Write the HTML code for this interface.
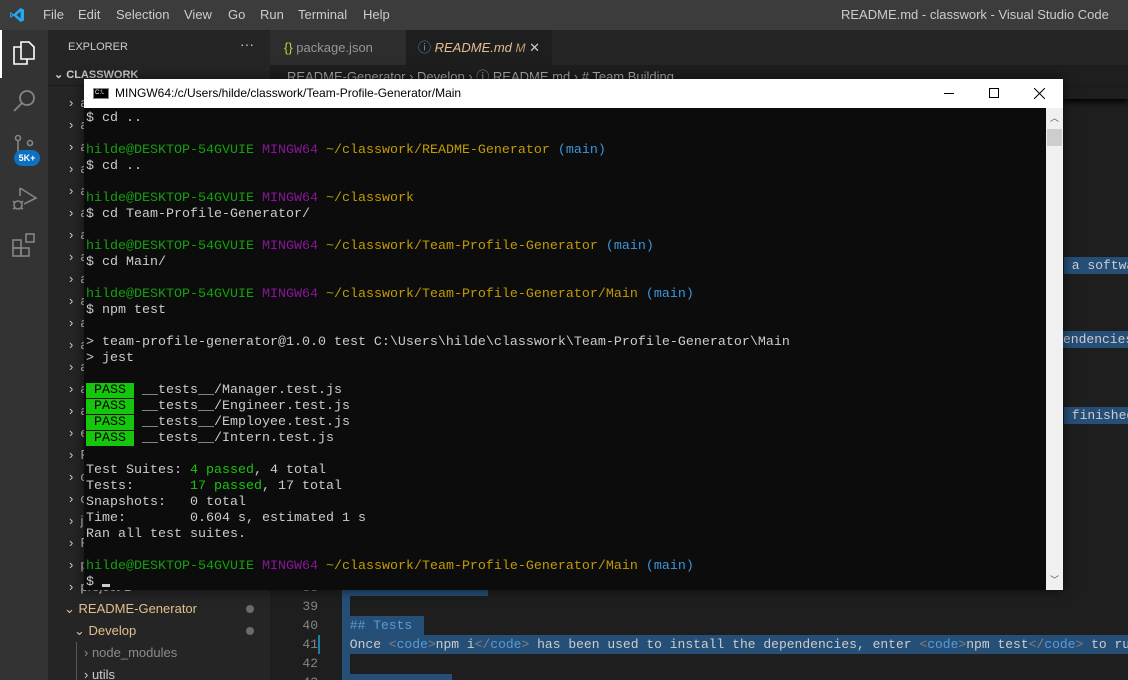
<!DOCTYPE html>
<html style="overflow:hidden;width:1128px;height:680px"><head><meta charset="utf-8"><style>
*{margin:0;padding:0;box-sizing:border-box}
body{width:1128px;height:680px;overflow:hidden;background:#1e1e1e;font-family:"Liberation Sans",sans-serif;position:relative}
.abs{position:absolute}
#title{left:0;top:0;width:1128px;height:30px;background:#3c3c3c;color:#ccc;font-size:13px}
#title span{position:absolute;top:7px}
#act{left:0;top:30px;width:48px;height:650px;background:#333;overflow:hidden}
#side{left:48px;top:30px;width:222px;height:650px;background:#252526;color:#ccc;font-size:13px;overflow:hidden}
#tabs{left:270px;top:30px;width:858px;height:35px;background:#252526}
.row{position:absolute;left:0;height:22px;line-height:22px}
.mono{font-family:"Liberation Mono","DejaVu Sans Mono",monospace}
#term{left:84px;top:79px;width:979px;height:511px;background:#0c0c0c;box-shadow:0 0 12px rgba(0,0,0,.6);overflow:hidden}
#tt{left:0;top:0;width:979px;height:29px;background:#fff;color:#000;font-size:12px}
#tb{left:0;top:30px;width:962px;height:481px;color:#ccc;font-size:13.33px;line-height:16px;white-space:pre}
.g{color:#13a10e}.p{color:#881798}.y{color:#c19c00}.b{color:#3a96dd}.gg{color:#16c60c}
.pass{background:#16c60c;color:#000}
.sel{background:#264f78}
</style></head><body>
<div id="title" class="abs">
<svg class="abs" style="left:9px;top:7px" width="16" height="16" viewBox="0 0 16 16"><path d="M11.5 1 L15 2.6 V13.4 L11.5 15 L4.5 8.6 L1.8 10.7 L1 10.3 V5.7 L1.8 5.3 L4.5 7.4 Z M11.5 4.6 L7.5 8 L11.5 11.4 Z M1.8 6.6 V9.4 L3.4 8 Z" fill="#23a9f2"/></svg>
<span style="left:43px">File</span><span style="left:78px">Edit</span><span style="left:116px">Selection</span><span style="left:184px">View</span><span style="left:228px">Go</span><span style="left:260px">Run</span><span style="left:298px">Terminal</span><span style="left:363px">Help</span>
<span style="left:841px">README.md - classwork - Visual Studio Code</span>
</div>
<div id="act" class="abs">
<div class="abs" style="left:0;top:0;width:2px;height:48px;background:#fff"></div>
<svg class="abs" style="left:12px;top:10px" width="24" height="26" viewBox="0 0 24 26" fill="none" stroke="#fff" stroke-width="1.6"><path d="M9 2h8l5 5v12H9z"/><path d="M9 7H2v17h13v-5"/></svg>
<svg class="abs" style="left:12px;top:58px" width="26" height="26" viewBox="0 0 26 26" fill="none" stroke="#858585" stroke-width="1.8"><circle cx="15" cy="10" r="7"/><path d="M10 15 2 23"/></svg>
<svg class="abs" style="left:14px;top:104px" width="22" height="22" viewBox="0 0 22 22" fill="none" stroke="#858585" stroke-width="1.6"><circle cx="4" cy="4" r="2.5"/><circle cx="16" cy="9" r="2.5"/><path d="M4 7v12"/></svg>
<div class="abs" style="left:14px;top:120px;width:26px;height:16px;border-radius:8px;background:#0e70c0;color:#fff;font-size:9px;font-weight:bold;text-align:center;line-height:16px">5K+</div>
<svg class="abs" style="left:11px;top:155px" width="28" height="28" viewBox="0 0 28 28" fill="none" stroke="#858585" stroke-width="1.6"><path d="M9 3l16 10-12 6"/><path d="M9 3v8"/><circle cx="7" cy="20" r="4"/><path d="M2 16l2 2M12 16l-2 2M2 24l2-1M12 24l-2-1"/></svg>
<svg class="abs" style="left:11px;top:202px" width="26" height="26" viewBox="0 0 26 26" fill="none" stroke="#858585" stroke-width="1.6"><rect x="2" y="8" width="8" height="8"/><rect x="2" y="16" width="8" height="8"/><rect x="10" y="16" width="8" height="8"/><rect x="15" y="2" width="8" height="8"/></svg>
</div>
<div id="side" class="abs">
<div class="abs" style="left:20px;top:11px;font-size:11px">EXPLORER</div>
<div class="abs" style="left:192px;top:6px;font-size:14px">···</div>
<div class="abs" style="left:6px;top:38px;font-size:11px;font-weight:bold">⌄ CLASSWORK</div>
<div class="abs" style="left:0;top:55px;width:222px;height:1px;background:#1b1b1b"></div>
<div class="abs" style="left:21px;top:62px;color:#ccc;font-size:13px;line-height:22px;white-space:pre">›  a
›  a
›  a
›  a
›  a
›  a
›  a
›  a
›  a
›  a
›  a
›  a
›  a
›  a
›  a
›  e
›  F
›  c
›  c
›  j
›  F
›  p
›  project-1</div>
<div class="row" style="top:568px;left:16px;color:#e2c08d;background:#252526;width:180px">⌄ README-Generator</div>
<div class="abs" style="left:198px;top:575px;width:8px;height:8px;border-radius:4px;background:#6b6b6b"></div>
<div class="row" style="top:590px;left:26px;color:#e2c08d">⌄ Develop</div>
<div class="abs" style="left:198px;top:597px;width:8px;height:8px;border-radius:4px;background:#6b6b6b"></div>
<div class="abs" style="left:28px;top:612px;width:1px;height:38px;background:#585858"></div>
<div class="row" style="top:612px;left:36px;color:#8b8b8b">›  node_modules</div>
<div class="row" style="top:634px;left:36px">›  utils</div>
</div>
<div id="tabs" class="abs">
<div class="abs" style="left:0;top:0;width:136px;height:35px;background:#2d2d2d;color:#969696;font-size:13px;line-height:35px;padding-left:14px"><span style="color:#cbcb41">{}</span> package.json</div>
<div class="abs" style="left:136px;top:0;width:146px;height:35px;background:#1e1e1e;color:#e2c08d;font-size:13px;line-height:35px;padding-left:12px;font-style:italic"><span style="color:#519aba;font-style:normal">ⓘ</span> README.md <span style="color:#c0a070;font-size:12px">M</span> <span style="color:#ccc;font-style:normal">✕</span></div>
</div>
<div class="abs" style="left:287px;top:66px;color:#a9a9a9;font-size:13px">README-Generator › Develop › ⓘ README.md › # Team Building</div>
<div class="abs" style="left:1063px;top:87px;width:65px;height:12px;background:#1e1e1e;box-shadow:0 3px 6px #000"></div>
<div class="abs sel mono" style="left:1064px;top:257px;width:64px;height:17px;color:#ccc;font-size:13px;line-height:17px;white-space:pre"> a softwa</div>
<div class="abs sel mono" style="left:1063px;top:331px;width:65px;height:17px;color:#ccc;font-size:13px;line-height:17px;white-space:pre">endencies</div>
<div class="abs sel mono" style="left:1064px;top:407px;width:64px;height:17px;color:#ccc;font-size:13px;line-height:17px;white-space:pre"> finished</div>
<div class="abs mono" style="left:292px;top:578px;width:26px;color:#858585;font-size:13px;line-height:19px;text-align:right;white-space:pre">38
39
40
41
42
43</div>
<div class="abs" style="left:318px;top:635px;width:2px;height:19px;background:#1b81a8"></div>
<div class="abs sel" style="left:342px;top:580px;width:146px;height:16px"></div>
<div class="abs sel" style="left:342px;top:596px;width:8px;height:20px"></div>
<div class="abs sel" style="left:342px;top:616px;width:82px;height:19px"></div>
<div class="abs sel mono" style="left:342px;top:635px;width:786px;height:19px;color:#ccc;font-size:13px;line-height:19px;white-space:pre;overflow:hidden"> Once <span style="color:#808080">&lt;</span><span style="color:#569cd6">code</span><span style="color:#808080">&gt;</span>npm i<span style="color:#808080">&lt;/</span><span style="color:#569cd6">code</span><span style="color:#808080">&gt;</span> has been used to install the dependencies, enter <span style="color:#808080">&lt;</span><span style="color:#569cd6">code</span><span style="color:#808080">&gt;</span>npm test<span style="color:#808080">&lt;/</span><span style="color:#569cd6">code</span><span style="color:#808080">&gt;</span> to run</div>
<div class="abs mono" style="left:342px;top:616px;color:#569cd6;font-size:13px;line-height:19px;white-space:pre"> ## Tests</div>
<div class="abs sel" style="left:342px;top:654px;width:8px;height:20px"></div>
<div class="abs sel" style="left:342px;top:674px;width:110px;height:6px"></div>
<div id="term" class="abs">
<div id="tt" class="abs">
<div class="abs" style="left:9px;top:9px;width:16px;height:11px;background:#000;border:1px solid #888;color:#fff;font-size:6px;line-height:9px;padding-left:1px">C:\.</div>
<div class="abs" style="left:31px;top:7px">MINGW64:/c/Users/hilde/classwork/Team-Profile-Generator/Main</div>
<div class="abs" style="left:860px;top:14px;width:10px;height:1px;background:#000"></div>
<div class="abs" style="left:905px;top:9px;width:10px;height:10px;border:1px solid #000"></div>
<svg class="abs" style="left:950px;top:9px" width="11" height="11" viewBox="0 0 11 11" stroke="#000"><path d="M0 0 11 11M11 0 0 11"/></svg>
</div>
<div class="abs" style="left:962px;top:29px;width:17px;height:482px;background:#f0f0f0"></div>
<div class="abs" style="left:963px;top:50px;width:15px;height:17px;background:#cdcdcd"></div>
<div class="abs" style="left:966px;top:32px;font-size:9px;color:#555">︿</div>
<div class="abs" style="left:966px;top:494px;font-size:9px;color:#555">﹀</div>
<div id="tb" class="abs mono" style="left:2px;top:32px">$ cd ..

<span class="g">hilde@DESKTOP-54GVUIE</span> <span class="p">MINGW64</span> <span class="y">~/classwork/README-Generator</span> <span class="b">(main)</span>
$ cd ..

<span class="g">hilde@DESKTOP-54GVUIE</span> <span class="p">MINGW64</span> <span class="y">~/classwork</span>
$ cd Team-Profile-Generator/

<span class="g">hilde@DESKTOP-54GVUIE</span> <span class="p">MINGW64</span> <span class="y">~/classwork/Team-Profile-Generator</span> <span class="b">(main)</span>
$ cd Main/

<span class="g">hilde@DESKTOP-54GVUIE</span> <span class="p">MINGW64</span> <span class="y">~/classwork/Team-Profile-Generator/Main</span> <span class="b">(main)</span>
$ npm test

&gt; team-profile-generator@1.0.0 test C:\Users\hilde\classwork\Team-Profile-Generator\Main
&gt; jest

<span class="pass"> PASS </span> __tests__/Manager.test.js
<span class="pass"> PASS </span> __tests__/Engineer.test.js
<span class="pass"> PASS </span> __tests__/Employee.test.js
<span class="pass"> PASS </span> __tests__/Intern.test.js

Test Suites: <span class="gg">4 passed</span>, 4 total
Tests:       <span class="gg">17 passed</span>, 17 total
Snapshots:   0 total
Time:        0.604 s, estimated 1 s
Ran all test suites.

<span class="g">hilde@DESKTOP-54GVUIE</span> <span class="p">MINGW64</span> <span class="y">~/classwork/Team-Profile-Generator/Main</span> <span class="b">(main)</span>
$ <span style="display:inline-block;width:8px;height:3px;background:#ccc;vertical-align:-2px"></span></div>
</div>
</body></html>
